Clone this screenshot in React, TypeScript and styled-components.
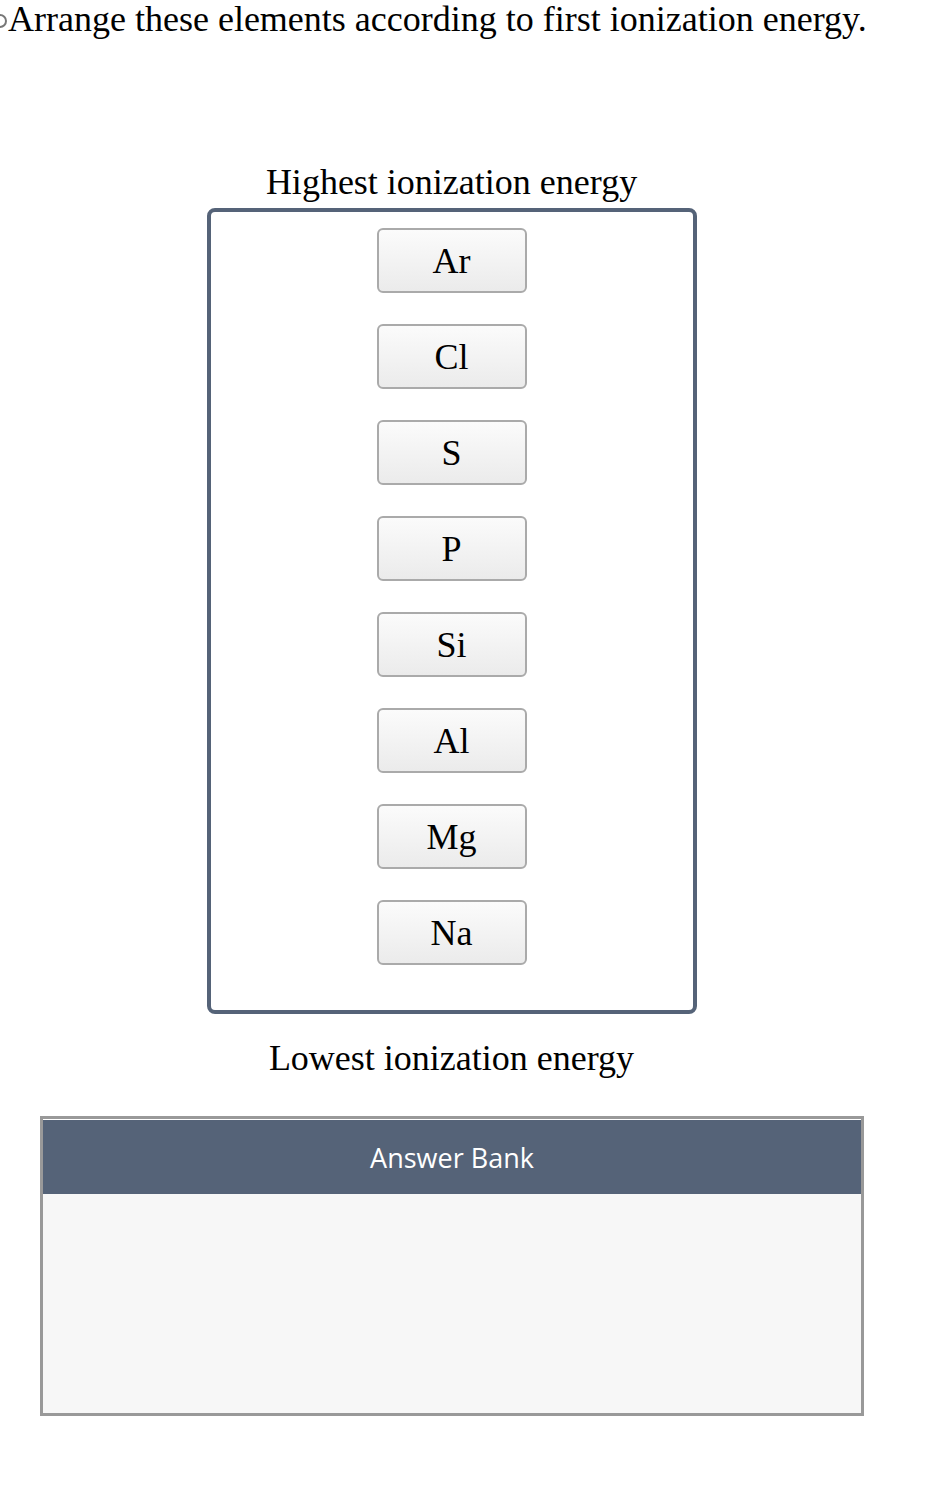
import styled, { createGlobalStyle } from "styled-components";

const GlobalStyle = createGlobalStyle`
  html, body {
    margin: 0;
    padding: 0;
    background: #ffffff;
  }
  body {
    font-family: "Liberation Serif", "Times New Roman", serif;
    color: #000;
  }
`;

const elements = ["Ar", "Cl", "S", "P", "Si", "Al", "Mg", "Na"];

export default function App() {
  return (
    <>
      <GlobalStyle />
      <Page>
        <Prompt>
          <Marker />
          Arrange these elements according to first ionization energy.
        </Prompt>

        <RankArea>
          <RankLabel>Highest ionization energy</RankLabel>
          <RankBox>
            {elements.map((el) => (
              <Tile key={el}>{el}</Tile>
            ))}
          </RankBox>
          <RankLabel $bottom>Lowest ionization energy</RankLabel>
        </RankArea>

        <AnswerBank>
          <BankHeader>Answer Bank</BankHeader>
          <BankBody />
        </AnswerBank>
      </Page>
    </>
  );
}

const Page = styled.div`
  width: 938px;
  padding-bottom: 90px;
`;

const Prompt = styled.div`
  display: flex;
  align-items: center;
  height: 38px;
  font-size: 36px;
  line-height: 38px;
`;

const Marker = styled.span`
  display: inline-block;
  width: 8px;
  height: 14px;
  overflow: hidden;
  position: relative;
  margin-top: 4px;

  &::before {
    content: "";
    position: absolute;
    left: -7px;
    top: 0;
    width: 10px;
    height: 10px;
    border: 2px solid #777;
    border-radius: 50%;
  }
`;

const RankArea = styled.div`
  display: flex;
  flex-direction: column;
  align-items: center;
  width: 903px;
  margin-top: 124px;
`;

const RankLabel = styled.div<{ $bottom?: boolean }>`
  font-size: 36px;
  line-height: 40px;
  margin: ${(p) => (p.$bottom ? "24px 0 0" : "0 0 6px")};
`;

const RankBox = styled.div`
  box-sizing: border-box;
  width: 490px;
  height: 806px;
  border: 4px solid #556378;
  border-radius: 8px;
  padding-top: 16px;
  display: flex;
  flex-direction: column;
  align-items: center;
  gap: 31px;
`;

const Tile = styled.div`
  box-sizing: border-box;
  width: 150px;
  height: 65px;
  border: 2px solid #aaaaaa;
  border-radius: 6px;
  background: linear-gradient(#fbfbfb, #ebebeb);
  display: flex;
  align-items: center;
  justify-content: center;
  font-size: 36px;
`;

const AnswerBank = styled.div`
  box-sizing: border-box;
  width: 824px;
  height: 300px;
  margin: 38px 0 0 40px;
  border: 3px solid #999999;
  display: flex;
  flex-direction: column;
`;

const BankHeader = styled.div`
  height: 74px;
  background: #556378;
  color: #ffffff;
  font-family: "Open Sans", "Noto Sans", sans-serif;
  font-size: 27px;
  font-weight: 500;
  display: flex;
  align-items: center;
  justify-content: center;
  margin-top: 1px;
`;

const BankBody = styled.div`
  flex: 1;
  background: #f7f7f7;
`;
